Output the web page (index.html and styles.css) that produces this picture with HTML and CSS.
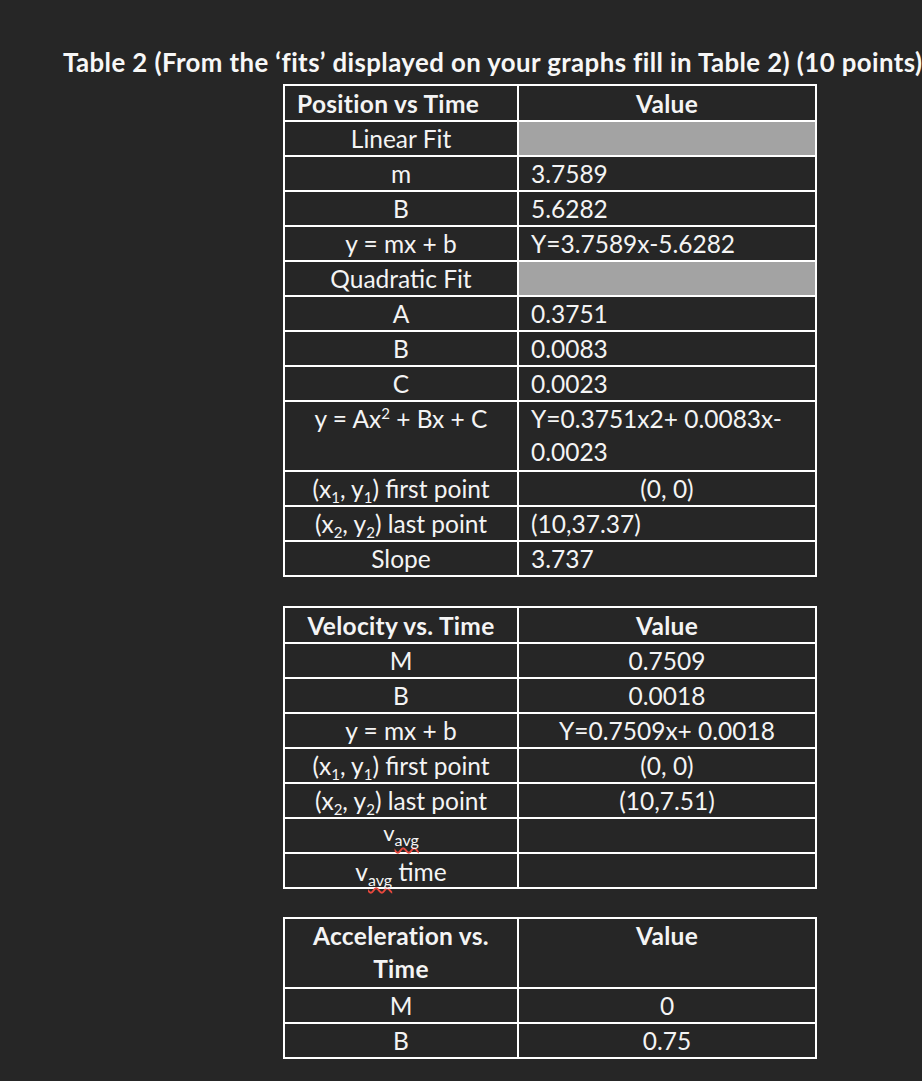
FILE: index.html
```html
<!DOCTYPE html>
<html>
<head>
<meta charset="utf-8">
<link rel="stylesheet" href="styles.css">
</head>
<body>
<div class="page">
  <h1 class="title">Table 2 (From the ‘fits’ displayed on your graphs fill in Table 2) (10 points)</h1>

  <table class="grid t1">
    <tr class="head"><td class="lbl lead">Position vs Time</td><td class="val ctr">Value</td></tr>
    <tr><td class="lbl">Linear Fit</td><td class="shade"></td></tr>
    <tr><td class="lbl">m</td><td class="val">3.7589</td></tr>
    <tr><td class="lbl">B</td><td class="val">5.6282</td></tr>
    <tr><td class="lbl">y = mx + b</td><td class="val">Y=3.7589x-5.6282</td></tr>
    <tr><td class="lbl">Quadratic Fit</td><td class="shade"></td></tr>
    <tr><td class="lbl">A</td><td class="val">0.3751</td></tr>
    <tr><td class="lbl">B</td><td class="val">0.0083</td></tr>
    <tr><td class="lbl">C</td><td class="val">0.0023</td></tr>
    <tr class="tall"><td class="lbl top">y = Ax<sup class="sup">2</sup> + Bx + C</td><td class="val top">Y=0.3751x2+ 0.0083x-<br>0.0023</td></tr>
    <tr><td class="lbl">(x<sub class="sub">1</sub>, y<sub class="sub">1</sub>) first point</td><td class="val ctr">(0, 0)</td></tr>
    <tr><td class="lbl">(x<sub class="sub">2</sub>, y<sub class="sub">2</sub>) last point</td><td class="val">(10,37.37)</td></tr>
    <tr><td class="lbl">Slope</td><td class="val">3.737</td></tr>
  </table>

  <table class="grid t2">
    <tr class="head"><td class="lbl">Velocity vs. Time</td><td class="val ctr">Value</td></tr>
    <tr><td class="lbl">M</td><td class="val ctr">0.7509</td></tr>
    <tr><td class="lbl">B</td><td class="val ctr">0.0018</td></tr>
    <tr><td class="lbl">y = mx + b</td><td class="val ctr">Y=0.7509x+ 0.0018</td></tr>
    <tr><td class="lbl">(x<sub class="sub">1</sub>, y<sub class="sub">1</sub>) first point</td><td class="val ctr">(0, 0)</td></tr>
    <tr><td class="lbl">(x<sub class="sub">2</sub>, y<sub class="sub">2</sub>) last point</td><td class="val ctr">(10,7.51)</td></tr>
    <tr><td class="lbl low">v<span class="avg">avg</span></td><td class="val"></td></tr>
    <tr><td class="lbl low2">v<span class="avg">avg</span> time</td><td class="val"></td></tr>
  </table>

  <table class="grid t3">
    <tr class="head tall"><td class="lbl top">Acceleration vs.<br>Time</td><td class="val ctr top">Value</td></tr>
    <tr class="short"><td class="lbl">M</td><td class="val ctr">0</td></tr>
    <tr class="short"><td class="lbl">B</td><td class="val ctr">0.75</td></tr>
  </table>
</div>
</body>
</html>
```

FILE: styles.css
```css
html, body {
  margin: 0;
  padding: 0;
  background: #262626;
}

body {
  font-family: Lato, "Open Sans", "Liberation Sans", sans-serif;
  color: #f4f4f4;
}

.page {
  padding-top: 46px;
  height: 1035px;
}

.title {
  margin: 0 0 5px 0;
  padding-left: 63px;
  font-size: 25.8px;
  font-weight: 700;
  line-height: 33px;
  white-space: nowrap;
  letter-spacing: 0.42px;
  color: #f7f7f7;
}

.grid {
  border-collapse: collapse;
  margin-left: 283px;
  width: 534px;
  table-layout: fixed;
  font-size: 24.5px;
}

.t2 { margin-top: 29px; }
.t3 { margin-top: 28px; }

.grid td {
  border: 2px solid #ffffff;
  height: 33px;
  padding: 0 12px;
  line-height: 33px;
  vertical-align: middle;
  white-space: nowrap;
}

.grid td.lbl {
  width: 208px;
  text-align: center;
}

.grid td.lead {
  text-align: left;
  padding-left: 12px;
}

.grid td.val {
  text-align: left;
}

.grid td.ctr {
  text-align: center;
}

.grid td.shade {
  background: #a3a3a3;
}

.head td {
  font-weight: 700;
  height: 34px;
  letter-spacing: 0.3px;
}

.tall td {
  height: 68px;
}

.short td {
  height: 32px;
}

.grid td.top {
  vertical-align: top;
}

.sup {
  font-size: 15px;
  line-height: 0;
  vertical-align: 9px;
}

.sub {
  font-size: 15px;
  line-height: 0;
  vertical-align: -5px;
}

.avg {
  font-size: 16px;
  line-height: 0;
  vertical-align: -5px;
  text-decoration-line: underline;
  text-decoration-style: wavy;
  text-decoration-color: #e8473c;
  text-decoration-thickness: 2px;
  text-decoration-skip-ink: none;
  text-underline-offset: 1px;
}

.grid td.low {
  font-size: 22px;
  line-height: 26px;
  vertical-align: bottom;
  padding-bottom: 6px;
  height: 27px;
}

.grid td.low2 {
  vertical-align: bottom;
  line-height: 30px;
}
```
